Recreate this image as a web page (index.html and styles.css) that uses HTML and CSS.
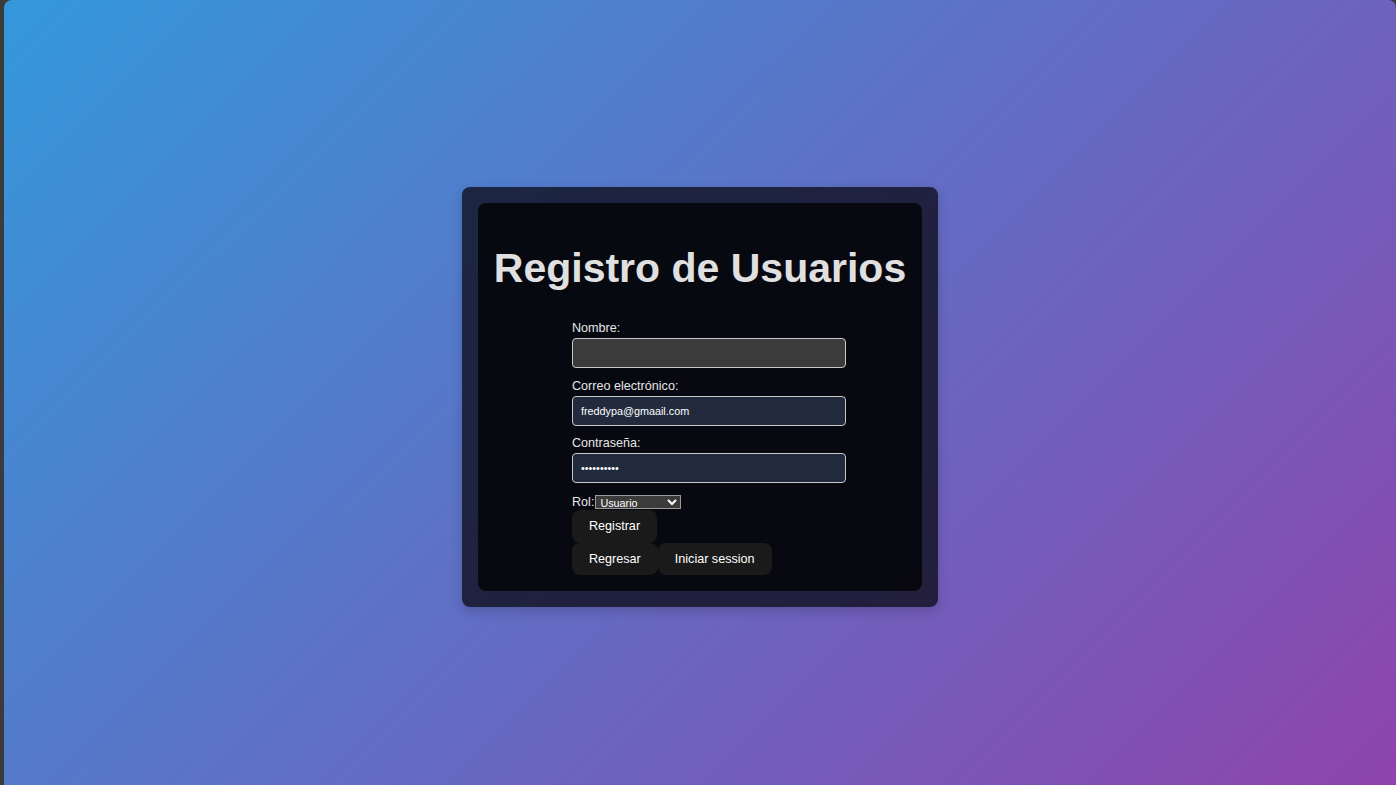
FILE: index.html
```html
<!DOCTYPE html>
<html lang="es">
<head>
<meta charset="utf-8">
<title>Registro de Usuarios</title>
<link rel="stylesheet" href="styles.css">
</head>
<body>
<div class="page">
  <div class="card">
    <div class="card-inner">
      <h1 class="title">Registro de Usuarios</h1>
      <form class="form">
        <div class="field">
          <label class="label" for="nombre">Nombre:</label>
          <input class="input input-empty" id="nombre" type="text">
        </div>
        <div class="field">
          <label class="label" for="correo">Correo electrónico:</label>
          <input class="input input-filled" id="correo" type="email" value="freddypa@gmaail.com">
        </div>
        <div class="field">
          <label class="label" for="clave">Contraseña:</label>
          <input class="input input-filled" id="clave" type="password" value="1234567890">
        </div>
        <div class="rol-row">
          <label class="rol-label" for="rol">Rol:</label><select class="select" id="rol">
            <option>Usuario</option>
            <option>Administrador</option>
          </select>
        </div>
        <div class="btn-row">
          <button class="btn" type="button">Registrar</button>
        </div>
        <div class="btn-row">
          <button class="btn" type="button">Regresar</button><button class="btn" type="button">Iniciar session</button>
        </div>
      </form>
    </div>
  </div>
</div>
</body>
</html>
```
FILE: styles.css
```css
html, body {
  margin: 0;
  padding: 0;
  height: 100%;
}
body {
  background: #3b3b3b;
  font-family: "Liberation Sans", Arial, sans-serif;
  overflow: hidden;
}
.page {
  margin-left: 4px;
  height: 785px;
  box-sizing: border-box;
  padding-top: 9px;
  border-radius: 8px 8px 0 0;
  background: linear-gradient(135deg, #3498db, #8e44ad);
  display: flex;
  align-items: center;
  justify-content: center;
}
.card {
  background: rgba(15, 15, 30, 0.8);
  border-radius: 8px;
  padding: 16px;
  box-shadow: 0 4px 12px rgba(0, 0, 0, 0.18);
}
.card-inner {
  background: rgba(0, 0, 0, 0.74);
  border-radius: 8px;
  padding: 16px;
  display: flex;
  flex-direction: column;
  align-items: center;
}
.title {
  margin: 26px 0 27px;
  font-size: 41px;
  line-height: 47px;
  font-weight: bold;
  color: #e0e0e0;
  white-space: nowrap;
}
.form {
  width: 256px;
  display: flex;
  flex-direction: column;
}
.field {
  margin-bottom: 9px;
}
.field:nth-child(2) {
  margin-bottom: 8px;
}
.label {
  display: block;
  font-size: 12.6px;
  line-height: 15px;
  color: #e6e6e6;
  padding-top: 2px;
  margin-bottom: 2px;
}
.input {
  display: block;
  width: 100%;
  box-sizing: content-box;
  height: 12px;
  padding: 8px;
  border: 1px solid #c8c8c8;
  border-radius: 4px;
  font-family: "Liberation Sans", Arial, sans-serif;
  font-size: 10.8px;
  color: #ffffff;
  outline: none;
}
.input-empty {
  background: #3b3b3b;
}
.input-filled {
  background: #222a3d;
}
.rol-row {
  display: flex;
  align-items: center;
  height: 18px;
  padding-top: 1px;
  box-sizing: border-box;
}
.rol-label {
  font-size: 12.6px;
  line-height: 14px;
  color: #e6e6e6;
  margin-right: 1px;
}
.select {
  width: 86px;
  height: 14px;
  padding: 0;
  margin: 0;
  border: 1px solid #9a9a9a;
  border-radius: 0;
  background: #3b3b3b;
  color: #ffffff;
  font-family: "Liberation Sans", Arial, sans-serif;
  font-size: 10.8px;
  color-scheme: dark;
}
.btn-row {
  display: flex;
}
.btn {
  height: 32.5px;
  padding: 0 17px;
  margin: 0;
  border: none;
  border-radius: 8px;
  background: #1a1a1a;
  color: #ffffff;
  font-family: "Liberation Sans", Arial, sans-serif;
  font-size: 12.6px;
  cursor: pointer;
}
```
